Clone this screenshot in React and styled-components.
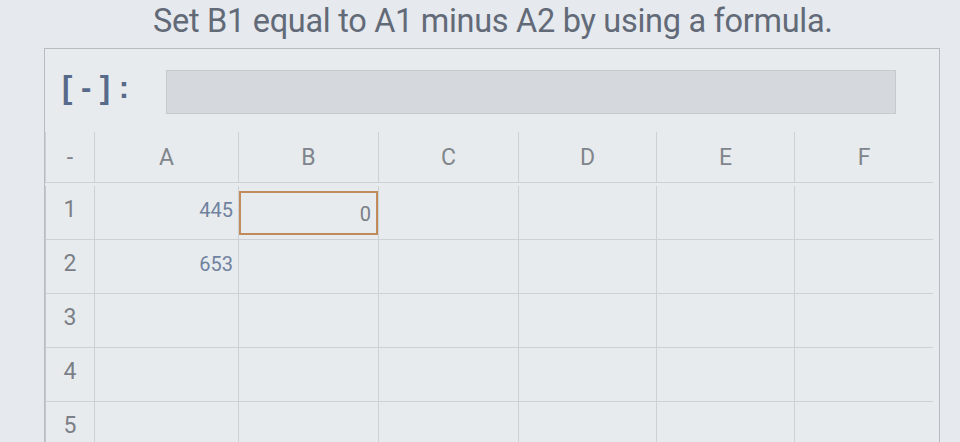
import React from "react";
import styled, { createGlobalStyle } from "styled-components";

const Global = createGlobalStyle`
  html, body { margin: 0; padding: 0; background: #e6e9ed; }
  body { font-family: Roboto, "Liberation Sans", Arial, sans-serif; overflow: hidden; }
`;

const Page = styled.div`
  width: 960px;
  height: 442px;
  overflow: hidden;
  padding: 0 20px 0 44px;
  box-sizing: border-box;
  background: #e6e9ed;
`;

const Title = styled.div`
  margin: 3px 0 8px 109px;
  font-size: 32.5px;
  line-height: 37px;
  color: #626a78;
  letter-spacing: -0.3px;
  white-space: nowrap;
`;

const Panel = styled.div`
  border: 1px solid #b7bcc2;
  border-bottom: none;
  padding: 21px 8px 0 0;
  background: #e8ebee;
`;

const FormulaRow = styled.div`
  display: flex;
  align-items: center;
  height: 44px;
  margin-bottom: 18px;
`;

const Label = styled.div`
  width: 121px;
  padding-left: 17px;
  box-sizing: border-box;
  font-family: "Liberation Sans", Arial, sans-serif;
  font-size: 31px;
  font-weight: bold;
  color: #586a89;
  white-space: pre;
  margin-top: -8px;
`;

const Input = styled.div`
  width: 730px;
  height: 44px;
  box-sizing: border-box;
  background: #d5d8dc;
  border: 1px solid #c6cacf;
`;

const Grid = styled.div`
  display: grid;
  grid-template-columns: 49px 144px 140px 140px 138px 138px 139px;
  grid-auto-rows: 54px;
`;

const Head = styled.div`
  height: 51px;
  display: flex;
  align-items: center;
  justify-content: center;
  font-size: 23px;
  color: #80858b;
  border-left: 1px solid #cdd1d6;
  border-bottom: 1px solid #cdd1d6;
  box-sizing: border-box;
`;

const RowHead = styled.div`
  display: flex;
  align-items: center;
  justify-content: center;
  padding-bottom: 6px;
  font-size: 23px;
  color: #7b8087;
  border-left: 1px solid #c3c8ce;
  border-bottom: 1px solid #cdd1d6;
  box-sizing: border-box;
`;

const Cell = styled.div`
  display: flex;
  align-items: center;
  justify-content: flex-end;
  padding: 0 5px 6px 0;
  font-size: 20px;
  color: #6f82a0;
  border-left: 1px solid #cdd1d6;
  border-bottom: 1px solid #cdd1d6;
  box-sizing: border-box;
  position: relative;
`;

const Selected = styled.div`
  position: absolute;
  inset: 5px 0 4px 0;
  border: 2px solid #c18c5c;
  display: flex;
  align-items: center;
  justify-content: flex-end;
  padding: 2px 5px 0 0;
  color: #7a7f86;
`;

const cols = ["A", "B", "C", "D", "E", "F"];
const data = { A1: "445", A2: "653" };

export default function App() {
  return (
    <>
      <Global />
      <Page>
        <Title>Set B1 equal to A1 minus A2 by using a formula.</Title>
        <Panel>
          <FormulaRow>
            <Label>{"[ - ] :"}</Label>
            <Input />
          </FormulaRow>
          <Grid>
            <Head>-</Head>
            {cols.map((c) => (
              <Head key={c}>{c}</Head>
            ))}
            {[1, 2, 3, 4, 5].map((r) => (
              <React.Fragment key={r}>
                <RowHead>{r}</RowHead>
                {cols.map((c) => (
                  <Cell key={c}>
                    {c === "B" && r === 1 ? <Selected>0</Selected> : data[c + r] || ""}
                  </Cell>
                ))}
              </React.Fragment>
            ))}
          </Grid>
        </Panel>
      </Page>
    </>
  );
}
